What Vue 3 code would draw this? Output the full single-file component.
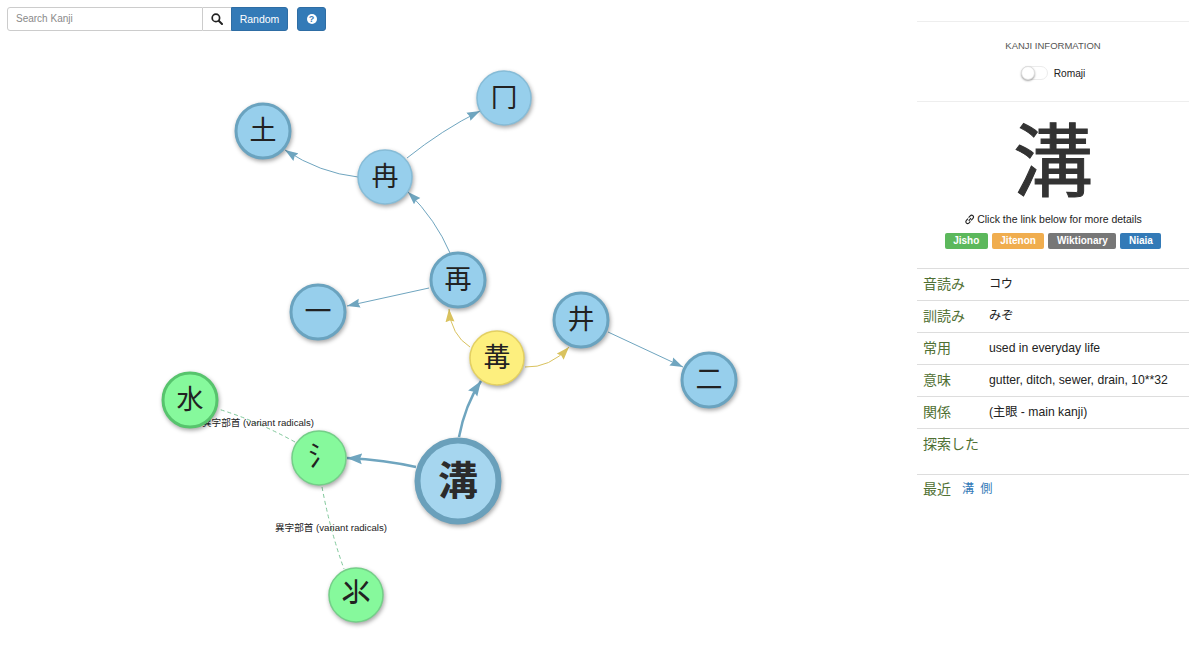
<script setup>
const edges = [
  { d: 'M358,177 Q320,173 285,150', c: 'blue thin', m: 'url(#ab)' },
  { d: 'M407,158 Q442,130 480,111', c: 'blue thin', m: 'url(#ab)' },
  { d: 'M450,253 Q436,220 408,192', c: 'blue thin', m: 'url(#ab)' },
  { d: 'M429,288 L347,306', c: 'blue thin', m: 'url(#ab)' },
  { d: 'M608,332 L683,367', c: 'blue thin', m: 'url(#ab)' },
  { d: 'M470,347 Q451,335 449,309', c: 'yellow', m: 'url(#ay)' },
  { d: 'M525,367 Q550,368 569,347', c: 'yellow', m: 'url(#ay)' },
  { d: 'M459,437 Q465,405 481,381', c: 'blue thick', m: 'url(#abl)' },
  { d: 'M416,467 Q385,460 347,458', c: 'blue thick', m: 'url(#abl)' },
  { d: 'M295,442 Q255,420 218,409', c: 'dash' },
  { d: 'M322,487 Q330,530 344,569', c: 'dash' },
]
const labels = [
  { x: 258, y: 426, t: '異字部首 (variant radicals)' },
  { x: 331, y: 531, t: '異字部首 (variant radicals)' },
]
const nodes = [
  { x: 263, y: 131, r: 27, t: '土', c: 'sky' },
  { x: 504, y: 98, r: 27, t: '冂', c: 'sky soft' },
  { x: 385, y: 177, r: 27, t: '冉', c: 'sky soft' },
  { x: 458, y: 280, r: 27, t: '再', c: 'sky' },
  { x: 318, y: 312, r: 27, t: '一', c: 'sky' },
  { x: 581, y: 320, r: 27, t: '井', c: 'sky' },
  { x: 709, y: 380, r: 27, t: '二', c: 'sky' },
  { x: 497, y: 358, r: 27, t: '冓', c: 'sun' },
  { x: 319, y: 458, r: 27, t: '氵', c: 'mint', dx: 3, dy: -1 },
  { x: 190, y: 400, r: 27, t: '水', c: 'mint strong' },
  { x: 356, y: 595, r: 27, t: '氺', c: 'mint tall-glyph', dy: -3 },
  { x: 458, y: 481, r: 40.5, t: '溝', c: 'main' },
]
const rows = [
  { k: '音読み', v: 'コウ' },
  { k: '訓読み', v: 'みぞ' },
  { k: '常用', v: 'used in everyday life' },
  { k: '意味', v: 'gutter, ditch, sewer, drain, 10**32' },
  { k: '関係', v: '(主眼 - main kanji)' },
]
const badges = [
  { t: 'Jisho', c: 'green' },
  { t: 'Jitenon', c: 'orange' },
  { t: 'Wiktionary', c: 'grey' },
  { t: 'Niaia', c: 'navy' },
]
</script>

<template>
  <div class="page">
    <main class="left">
      <div class="toolbar">
        <div class="search">
          <div class="input">Search Kanji</div>
          <div class="addon">
            <svg width="12" height="12" viewBox="0 0 12 12">
              <circle cx="4.9" cy="4.9" r="3.7" fill="none" stroke="#222" stroke-width="1.7" />
              <path d="M7.7 7.7 L11 11" stroke="#222" stroke-width="2" stroke-linecap="round" />
            </svg>
          </div>
        </div>
        <button class="btn random">Random</button>
        <button class="btn help"><span class="q">?</span></button>
      </div>
      <svg class="graph" width="917" height="629" viewBox="0 38 917 629">
        <defs>
          <marker id="ab" markerUnits="userSpaceOnUse" markerWidth="14" markerHeight="10" refX="13" refY="5" orient="auto">
            <path d="M0,0.5 L13,5 L0,9.5 L1.5,5 Z" fill="#6fa5bf" />
          </marker>
          <marker id="abl" markerUnits="userSpaceOnUse" markerWidth="16" markerHeight="12" refX="15" refY="6" orient="auto">
            <path d="M0,0.5 L15,6 L0,11.5 L2,6 Z" fill="#6fa5bf" />
          </marker>
          <marker id="ay" markerUnits="userSpaceOnUse" markerWidth="14" markerHeight="10" refX="13" refY="5" orient="auto">
            <path d="M0,0.5 L13,5 L0,9.5 L1.5,5 Z" fill="#d9c25e" />
          </marker>
        </defs>
        <path v-for="(e, i) in edges" :key="i" :d="e.d" :class="['edge', e.c]" :marker-end="e.m" />
        <text v-for="(l, i) in labels" :key="'l' + i" class="label" :x="l.x" :y="l.y" text-anchor="middle">{{ l.t }}</text>
        <g v-for="n in nodes" :key="n.t" :class="['node', n.c]">
          <circle :cx="n.x" :cy="n.y" :r="n.r" />
          <text :x="n.x + (n.dx || 0)" :y="n.y + (n.dy || 0)" text-anchor="middle" dominant-baseline="central">{{ n.t }}</text>
        </g>
      </svg>
    </main>

    <aside class="side">
      <header class="head">
        <h2 class="title">KANJI INFORMATION</h2>
        <div class="toggle-row">
          <span class="toggle"><span class="knob"></span></span>
          <span class="toggle-label">Romaji</span>
        </div>
      </header>
      <div class="big">溝</div>
      <div class="hint">
        <svg width="11" height="11" viewBox="0 0 12 12" fill="none" stroke="#222" stroke-width="1.2">
          <path d="M5.2 7.4 L7.6 4.6 M4.4 5 L2.4 7.3 A2 2 0 0 0 5.3 10 L7 8 M5 4 L6.8 2 A2 2 0 0 1 9.8 4.7 L7.8 7" />
        </svg>
        Click the link below for more details
      </div>
      <div class="badges">
        <span v-for="b in badges" :key="b.t" :class="['badge', b.c]">{{ b.t }}</span>
      </div>
      <div class="table">
        <div v-for="r in rows" :key="r.k" class="row">
          <span class="key">{{ r.k }}</span>
          <span class="val">{{ r.v }}</span>
        </div>
        <div class="row tall"><span class="key">探索した</span></div>
        <div class="row recent">
          <span class="key">最近</span>
          <span class="links"><span>溝</span><span>側</span></span>
        </div>
      </div>
    </aside>
  </div>
</template>

<style>
html, body { margin: 0; background: #fff; }
</style>

<style scoped>
.page {
  display: flex;
  width: 1200px;
  height: 667px;
  overflow: hidden;
  font-family: "Liberation Sans", "Noto Sans CJK JP", sans-serif;
  color: #222;
  background: #fff;
}
.left { width: 917px; flex: none; }
.toolbar {
  display: flex;
  align-items: flex-start;
  height: 38px;
  box-sizing: border-box;
  padding: 7px 0 0 7px;
}
.search { display: flex; height: 24px; }
.input {
  width: 196px;
  box-sizing: border-box;
  border: 1px solid #ccc;
  border-radius: 3px 0 0 3px;
  padding: 0 8px;
  font-size: 10px;
  line-height: 21px;
  color: #8a8a8a;
}
.addon {
  width: 28px;
  box-sizing: border-box;
  border: 1px solid #ccc;
  border-left: none;
  border-right: none;
  display: flex;
  align-items: center;
  justify-content: center;
}
.btn {
  height: 24px;
  padding: 0;
  border: 1px solid #2e6da4;
  background: #337ab7;
  color: #fff;
  font-family: inherit;
  font-size: 10.5px;
  border-radius: 3px;
  display: flex;
  align-items: center;
  justify-content: center;
}
.random { width: 57px; border-radius: 0 3px 3px 0; }
.help { width: 29px; margin-left: 9px; }
.q {
  width: 10px;
  height: 10px;
  border-radius: 50%;
  background: #fff;
  color: #337ab7;
  font-size: 9px;
  font-weight: 700;
  line-height: 10px;
  text-align: center;
}
.graph { display: block; }
.edge { fill: none; }
.blue { stroke: #6fa5bf; }
.thin { stroke-width: 1; }
.thick { stroke-width: 2.5; }
.yellow { stroke: #d9c25e; stroke-width: 1; }
.dash { stroke: #7fc79a; stroke-width: 1; stroke-dasharray: 4 3; }
.label { font-size: 9.6px; fill: #222; }
.node circle { filter: drop-shadow(1px 2px 2px rgba(0, 0, 0, 0.35)); }
.node text { font-size: 27px; fill: #222; }
.tall-glyph text {
  transform-box: fill-box;
  transform-origin: center;
  transform: scale(1.08, 1.45);
}
.sky circle { fill: #97cfec; stroke: #6aa3bf; stroke-width: 3; }
.soft circle { stroke: #86bcd7; stroke-width: 1.5; }
.sun circle { fill: #fdef7e; stroke: #e3d062; stroke-width: 1.5; }
.mint circle { fill: #86f99c; stroke: #74cf88; stroke-width: 1.5; }
.strong circle { stroke: #57c46d; stroke-width: 3; }
.main circle { fill: #a6d6ef; stroke: #6aa0bb; stroke-width: 6; }
.main text { font-size: 40px; font-weight: 700; fill: #2b2b2b; }

.side { width: 272px; flex: none; margin-top: 21px; }
.head {
  height: 81px;
  box-sizing: border-box;
  border-top: 1px solid #eee;
  border-bottom: 1px solid #eee;
  text-align: center;
  padding-top: 18px;
}
.title { margin: 0; font-size: 9.5px; line-height: 12px; font-weight: 400; color: #555; }
.toggle-row {
  display: flex;
  justify-content: center;
  align-items: center;
  gap: 6px;
  margin-top: 14px;
}
.toggle {
  position: relative;
  display: block;
  width: 25px;
  height: 12px;
  border: 1px solid #ececec;
  border-radius: 7px;
}
.knob {
  position: absolute;
  left: -1px;
  top: -1px;
  width: 12px;
  height: 12px;
  border-radius: 50%;
  background: #fff;
  border: 1px solid #ddd;
  box-shadow: 0 1px 2px rgba(0, 0, 0, 0.35);
}
.toggle-label { font-size: 10.2px; color: #222; }
.big {
  height: 98px;
  margin-top: 12px;
  text-align: center;
  font-size: 80px;
  line-height: 98px;
  color: #333;
  -webkit-text-stroke: 1px #333;
}
.hint {
  display: flex;
  justify-content: center;
  align-items: center;
  gap: 2px;
  height: 14px;
  font-size: 10.5px;
  color: #222;
}
.badges { display: flex; justify-content: center; gap: 4px; margin-top: 7px; }
.badge {
  height: 16px;
  padding: 0 8.5px;
  border-radius: 2px;
  font-size: 10px;
  line-height: 16px;
  font-weight: 700;
  color: #fff;
}
.green { background: #5cb85c; }
.orange { background: #f0ad4e; }
.grey { background: #777; }
.navy { background: #337ab7; }
.table { margin-top: 19px; border-top: 1px solid #ddd; }
.row {
  display: flex;
  align-items: flex-start;
  height: 32px;
  box-sizing: border-box;
  border-bottom: 1px solid #ddd;
  padding: 6px 6px 0;
  font-size: 12.2px;
  line-height: 18px;
}
.key { width: 66px; flex: none; font-size: 14px; color: #4f7033; line-height: 18px; }
.val { color: #222; }
.tall { height: 46px; }
.recent { border-bottom: none; padding-top: 5px; }
.recent .key { width: 39px; }
.links { display: flex; gap: 6px; color: #337ab7; line-height: 18px; }
</style>
